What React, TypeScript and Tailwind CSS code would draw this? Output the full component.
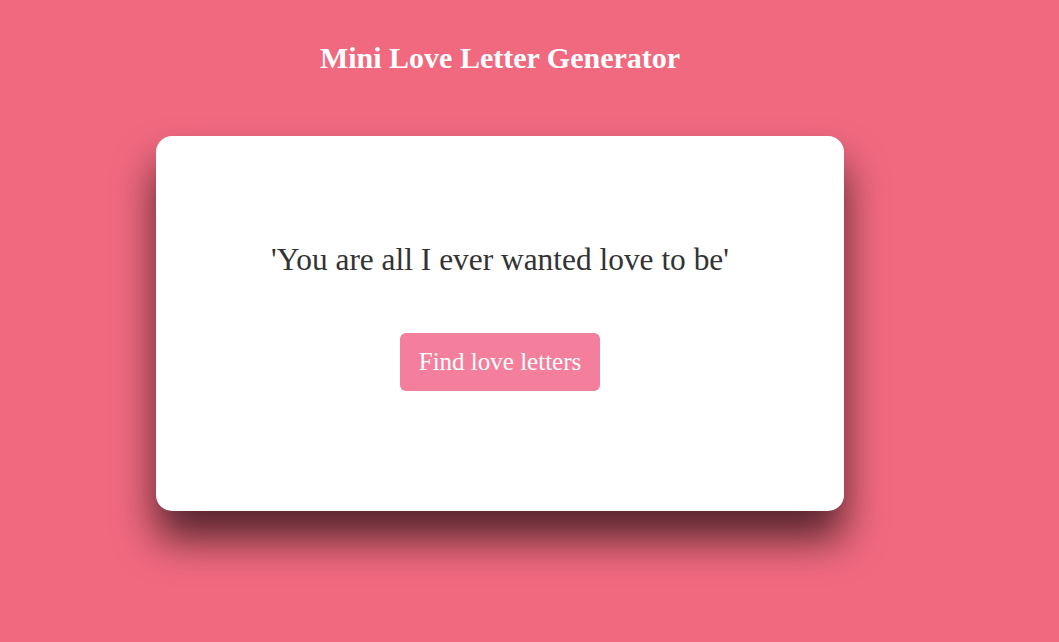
export default function App() {
  return (
    <div className="min-h-[642px] w-full bg-[#f0697f]" style={{ fontFamily: '"Liberation Serif", "Times New Roman", serif' }}>
      <div className="w-[1000px] flex flex-col items-center">
        <h1 className="mt-[41px] text-[30px] leading-[34px] font-bold text-white">Mini Love Letter Generator</h1>
        <div className="mt-[61px] w-[688px] h-[375px] bg-white rounded-[16px] shadow-[0_28px_40px_rgba(0,0,0,0.65)] flex flex-col items-center pt-[104px]">
          <p className="text-[31.4px] leading-[40px] text-[#333333]">'You are all I ever wanted love to be'</p>
          <button className="mt-[53px] w-[200px] h-[58px] rounded-[6px] bg-[#f47f9d] text-white text-[25px]">Find love letters</button>
        </div>
      </div>
    </div>
  );
}
